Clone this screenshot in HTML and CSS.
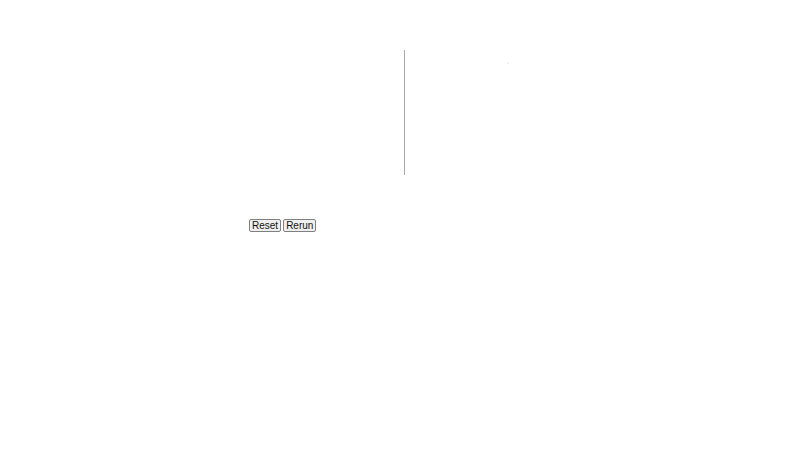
FILE: index.html
```html
<!DOCTYPE html>
<html>
<head>
<meta charset="utf-8">
<link rel="stylesheet" href="styles.css">
</head>
<body>
<div class="app">
  <div class="stage">
    <div class="divider"></div>
    <div class="dot"></div>
  </div>
  <div class="controls">
    <button class="btn">Reset</button>
    <button class="btn">Rerun</button>
  </div>
</div>
</body>
</html>
```
FILE: styles.css
```css
html, body {
  margin: 0;
  background: #ffffff;
  font-family: "Liberation Sans", Arial, sans-serif;
}
.app {
  width: 302px;
  margin: 50px auto 0;
}
.stage {
  height: 125px;
  display: flex;
  align-items: stretch;
}
.divider {
  width: 1px;
  margin-left: 155px;
  background: #a8a8a8;
}
.dot {
  width: 2px;
  height: 2px;
  margin: 12px 0 0 102px;
  background: #eeeeee;
  border-radius: 50%;
}
.controls {
  margin-top: 44px;
  display: flex;
  gap: 2px;
}
.btn {
  font-family: "Liberation Sans", Arial, sans-serif;
  font-size: 10px;
  line-height: 11px;
  padding: 0 2px;
  margin: 0;
  background: #efefef;
  color: #111;
  border: 1px solid #808080;
  border-radius: 2px;
}
```
